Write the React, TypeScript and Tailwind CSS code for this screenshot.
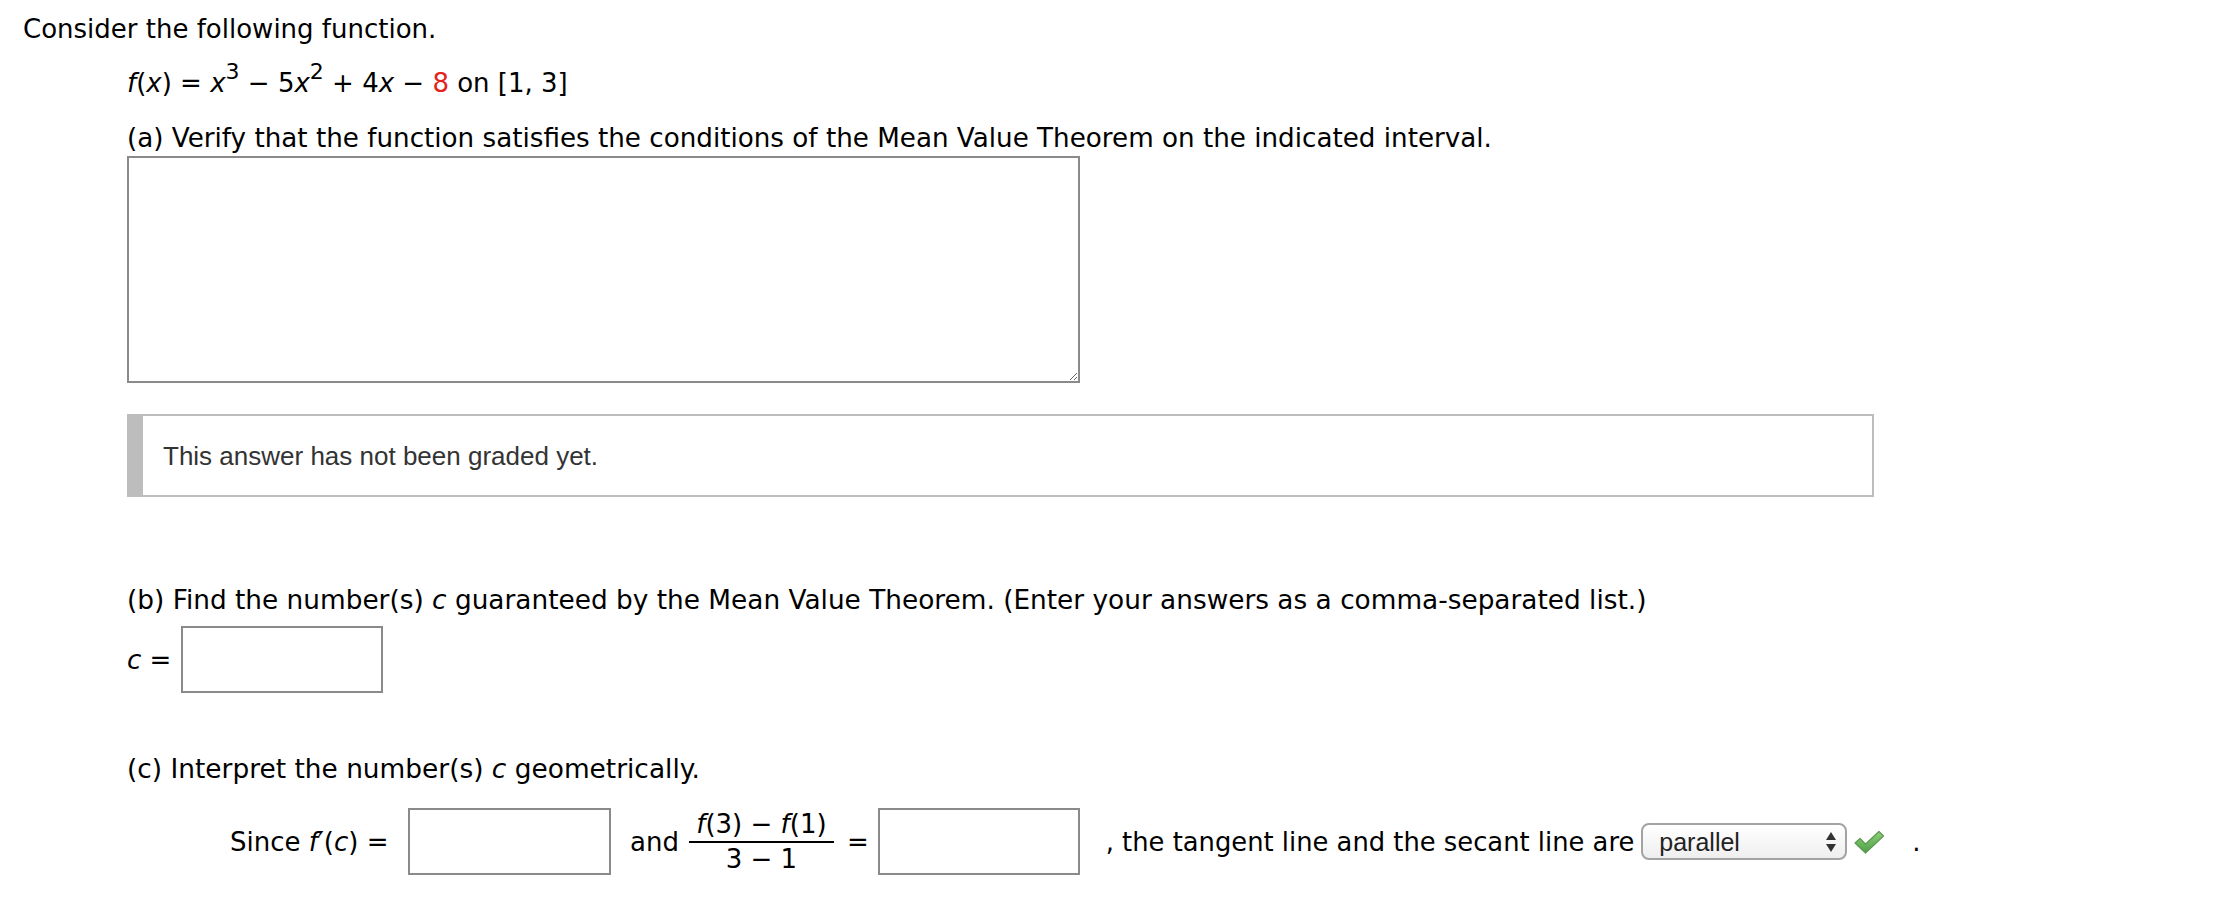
import React from 'react';

const Input: React.FC<{ w: string }> = ({ w }) => (
  <div className={`${w} h-[67px] border-2 border-[#8a8a8a] bg-white`} />
);

const Sup: React.FC<{ children: React.ReactNode }> = ({ children }) => (
  <span className="relative -top-[13px] text-[22px] leading-none">{children}</span>
);

const Check: React.FC = () => (
  <svg width="32" height="26" viewBox="0 0 32 26" className="ml-[6px]">
    <defs>
      <linearGradient id="chk" x1="0" y1="0" x2="0" y2="1">
        <stop offset="0" stopColor="#8fd07a" />
        <stop offset="1" stopColor="#4e9e45" />
      </linearGradient>
    </defs>
    <path
      d="M2 14 L7 9.5 L12.5 15 L26 2.5 L30.5 7 L12.5 24 Z"
      fill="url(#chk)"
      stroke="#5a9a50"
      strokeWidth="1.2"
      strokeLinejoin="round"
    />
  </svg>
);

export default function App() {
  return (
    <div className="w-[2230px] h-[900px] bg-white text-black font-['DejaVu_Sans',sans-serif] text-[26px] leading-[30px]">
      <p className="pl-[23px] pt-[14px]">Consider the following function.</p>

      <div className="pl-[127px]">
        <p className="mt-[24px]">
          <i>f</i>(<i>x</i>) = <i>x</i>
          <Sup>3</Sup> − 5<i>x</i>
          <Sup>2</Sup> + 4<i>x</i> − <span className="text-[#e3241b]">8</span> on [1, 3]
        </p>

        <p className="mt-[25px] text-[26.2px]">
          (a) Verify that the function satisfies the conditions of the Mean Value Theorem on the indicated interval.
        </p>

        <textarea
          className="block mt-[3px] w-[953px] h-[227px] border-2 border-[#8a8a8a] bg-white outline-none"
          readOnly
        />

        <div className="mt-[31px] w-[1747px] h-[83px] flex border-2 border-l-0 border-[#bdbdbd]">
          <div className="w-[16px] bg-[#bdbdbd]" />
          <div className="flex items-center pl-[20px] font-['Liberation_Sans',sans-serif] text-[#333] text-[26px]">
            This answer has not been graded yet.
          </div>
        </div>

        <p className="mt-[88px] text-[26.35px]">
          (b) Find the number(s) <i>c</i> guaranteed by the Mean Value Theorem. (Enter your answers as a comma-separated list.)
        </p>

        <div className="mt-[11px] flex items-center">
          <span className="w-[54px]">
            <i>c</i> =
          </span>
          <Input w="w-[202px]" />
        </div>

        <p className="mt-[61px] text-[26.4px]">
          (c) Interpret the number(s) <i>c</i> geometrically.
        </p>

        <div className="mt-[24px] flex items-center pl-[103px]">
          <span className="w-[178px]">
            Since <i>f</i>
            {'\u2032'}(<i>c</i>) =
          </span>
          <Input w="w-[203px]" />
          <span className="ml-[19px]">and</span>
          <div className="ml-[10px] flex flex-col items-center">
            <span className="pb-[2px]">
              <i>f</i>(3) − <i>f</i>(1)
            </span>
            <div className="w-[145px] h-[2px] bg-black" />
            <span className="pt-[1px]">3 − 1</span>
          </div>
          <span className="ml-[13px] mr-[9px]">=</span>
          <Input w="w-[202px]" />
          <span className="ml-[26px] text-[25.8px]">, the tangent line and the secant line are</span>
          <div className="ml-[7px] w-[206px] h-[37px] flex items-center justify-between pl-[16px] pr-[8px] rounded-[8px] border-2 border-[#a3a3a3] bg-gradient-to-b from-white to-[#efefef] font-['Liberation_Sans',sans-serif] text-[25px] text-[#222]">
            <span>parallel</span>
            <svg width="12" height="22" viewBox="0 0 12 22">
              <path d="M6 1 L11 9 L1 9 Z" fill="#333" />
              <path d="M1 13 L11 13 L6 21 Z" fill="#333" />
            </svg>
          </div>
          <Check />
          <span className="ml-[27px]">.</span>
        </div>
      </div>
    </div>
  );
}
